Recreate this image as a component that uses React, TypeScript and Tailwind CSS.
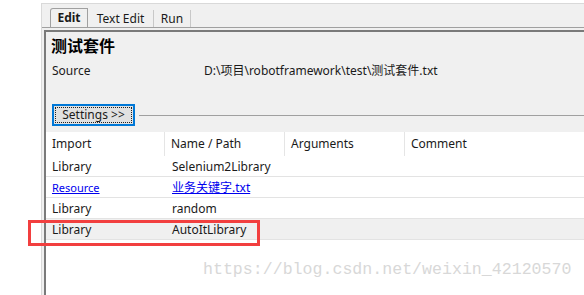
const font = { fontFamily: '"Noto Sans", "Noto Sans CJK SC", sans-serif' };

const rows = [
  { type: "Library", name: "Selenium2Library" },
  { type: "Resource", name: "业务关键字.txt", link: true },
  { type: "Library", name: "random" },
  { type: "Library", name: "AutoItLibrary", selected: true },
];

const headers = ["Import", "Name / Path", "Arguments", "Comment"];

export default function App() {
  return (
    <div
      className="relative flex h-[295px] w-[584px] overflow-hidden bg-white text-[12px] text-[#1a1a1a]"
      style={font}
    >
      <div className="w-[41px] shrink-0 bg-white" />
      <div className="mt-[3px] flex flex-1 flex-col border-l border-t border-[#d9d9d9] bg-[#f0f0f0]">
        {/* tab strip */}
        <div className="flex h-[24px] items-end border-b border-[#a0a0a0] pl-[8px]">
          <div className="flex h-[19px] w-[38px] items-center justify-center rounded-tl-[3px] border-l border-r border-t border-[#a0a0a0] font-bold">
            Edit
          </div>
          <div className="flex h-[17px] w-[66px] items-center justify-center border-r border-[#c8c8c8]">Text Edit</div>
          <div className="flex h-[17px] w-[37px] items-center justify-center border-r border-[#c8c8c8]">Run</div>
        </div>

        {/* panel */}
        <div className="ml-[2px] mt-[2px] flex flex-1 flex-col border-l-2 border-t-2 border-[#7a7a7a]">
          <div className="pl-[5px] pt-[4px] text-[16px] font-bold leading-[20px] text-black">测试套件</div>
          <div className="mt-[8px] flex h-[14px] items-center pl-[6px] leading-[14px]">
            <span className="w-[152px]">Source</span>
            <span>D:\项目\robotframework\test\测试套件.txt</span>
          </div>

          <div className="mt-[26px] flex items-center pl-[6px]">
            <div className="flex h-[22px] w-[83px] items-center justify-center border-2 border-[#0078d7] bg-[#e1e1e1]">
              <div className="flex h-[16px] w-[77px] items-center justify-center border border-dotted border-[#222]">
                Settings &gt;&gt;
              </div>
            </div>
            <div className="ml-[4px] h-px flex-1 bg-[#a0a0a0]" />
          </div>

          {/* table */}
          <div className="mt-[6px] flex-1 bg-white">
            <div className="grid h-[24px] grid-cols-[119px_120px_120px_1fr]">
              {headers.map((h) => (
                <div key={h} className="flex items-center border-r border-[#e5e5e5] pl-[6px] last:border-r-0">
                  {h}
                </div>
              ))}
            </div>
            {rows.map((row, i) => (
              <div
                key={i}
                className={`grid h-[21px] grid-cols-[119px_120px_120px_1fr] border-b border-[#e3e3e3] ${
                  row.selected ? "bg-[#f0f0f0]" : "bg-white"
                }`}
              >
                <div className="flex items-center pl-[6px] pt-[2px]">
                  <span className={row.link ? "text-[11px] text-[#0000ee] underline" : ""}>{row.type}</span>
                </div>
                <div className="flex items-center pl-[7px] pt-[2px]">
                  <span className={row.link ? "text-[#0000ee] underline" : ""}>{row.name}</span>
                </div>
                <div />
                <div />
              </div>
            ))}
          </div>
        </div>
      </div>

      {/* annotation box */}
      <div className="absolute left-[28px] top-[220px] h-[26px] w-[232px] border-[3px] border-[#f23f3f]" />

      {/* watermark */}
      <div
        className="absolute left-[203px] top-[257px] text-[16.6px] leading-[26px] text-[#d8d8d8]"
        style={{ fontFamily: '"Liberation Mono", monospace' }}
      >
        https://blog.csdn.net/weixin_42120570
      </div>
    </div>
  );
}
